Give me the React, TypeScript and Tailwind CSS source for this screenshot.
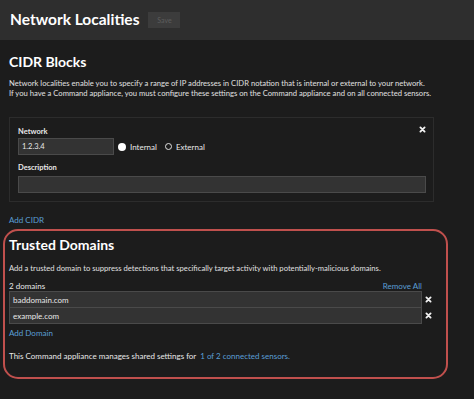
import React from 'react';

const XIcon = () => (
  <svg width="7" height="7" viewBox="0 0 10 10" className="block">
    <path d="M2 2 L8 8 M8 2 L2 8" stroke="#f2f2f2" strokeWidth="2.6" strokeLinecap="round" />
  </svg>
);

export default function App() {
  const domains = ['baddomain.com', 'example.com'];

  return (
    <div className="w-[474px] h-[399px] overflow-hidden bg-[#1c1c1c] text-[#e8e8e8] font-['Lato',sans-serif]">
      {/* Header */}
      <div className="h-[40px] bg-[#2e2e2e] flex items-center pl-[10px] gap-[9px]">
        <h1 className="text-[15.5px] font-bold text-white">Network Localities</h1>
        <button className="h-[16px] w-[32px] bg-[#3c3c3c] text-[#5c5c5c] text-[7px] leading-none">Save</button>
      </div>

      <div className="px-[9px] pt-[13px]">
        <h2 className="text-[14px] font-bold leading-[18px] text-white">CIDR Blocks</h2>
        <p className="mt-[8px] text-[7.65px] leading-[9.5px] text-[#e0e0e0]">
          Network localities enable you to specify a range of IP addresses in CIDR notation that is internal or external to your network.
          <br />
          If you have a Command appliance, you must configure these settings on the Command appliance and on all connected sensors.
        </p>

        {/* CIDR card */}
        <div className="mt-[19px] w-[425px] border border-[#2c2c2c] pl-[8px] pr-[7px] pt-[9px] pb-[8px]">
          <div className="flex justify-between items-center">
            <span className="text-[7.5px] font-bold leading-[10px]">Network</span>
            <span className="mt-[-6px]"><XIcon /></span>
          </div>
          <div className="mt-[1px] flex items-center">
            <div className="h-[17px] w-[96px] bg-[#333333] border border-[#4a4a4a] flex items-center px-[3px] text-[7.5px]">1.2.3.4</div>
            <span className="ml-[4px] w-[8px] h-[8px] rounded-full bg-white" />
            <span className="ml-[4px] text-[8px]">Internal</span>
            <span className="ml-[8px] w-[7px] h-[7px] rounded-full border border-[#e0e0e0]" />
            <span className="ml-[4px] text-[8px]">External</span>
          </div>
          <div className="mt-[8px] text-[7.5px] font-bold leading-[10px]">Description</div>
          <div className="mt-[3px] h-[17px] w-[408px] bg-[#333333] border border-[#4a4a4a]" />
        </div>

        <a className="block mt-[13px] text-[8px] leading-[10px] text-[#5b9fd6]">Add CIDR</a>

        {/* Trusted Domains (annotated) */}
        <div className="mt-[4px] ml-[-6px] w-[445px] h-[150px] rounded-[15px] border-2 border-[#c0504d] pl-[4px] pt-[5px]">
          <h2 className="text-[14px] font-bold leading-[18px] text-white">Trusted Domains</h2>
          <p className="mt-[9px] text-[7.65px] leading-[10px] text-[#e0e0e0]">
            Add a trusted domain to suppress detections that specifically target activity with potentially-malicious domains.
          </p>
          <div className="mt-[8px] w-[413px] flex justify-between text-[8px] leading-[10px]">
            <span>2 domains</span>
            <a className="text-[#5b9fd6]">Remove All</a>
          </div>
          <div className="flex flex-col">
            {domains.map((d, i) => (
              <div key={d} className={i > 0 ? 'flex items-center -mt-[1px]' : 'flex items-center'}>
                <div className="h-[17px] w-[413px] bg-[#333333] border border-[#4a4a4a] flex items-center px-[3px] text-[8px]">
                  {d}
                </div>
                <span className="ml-[3px]"><XIcon /></span>
              </div>
            ))}
          </div>
          <a className="block mt-[4px] text-[8px] leading-[10px] text-[#5b9fd6]">Add Domain</a>
          <p className="mt-[13px] text-[8px] leading-[10px]">
            This Command appliance manages shared settings for{' '}
            <a className="ml-[2px] text-[#5b9fd6]">1 of 2 connected sensors.</a>
          </p>
        </div>
      </div>
    </div>
  );
}
